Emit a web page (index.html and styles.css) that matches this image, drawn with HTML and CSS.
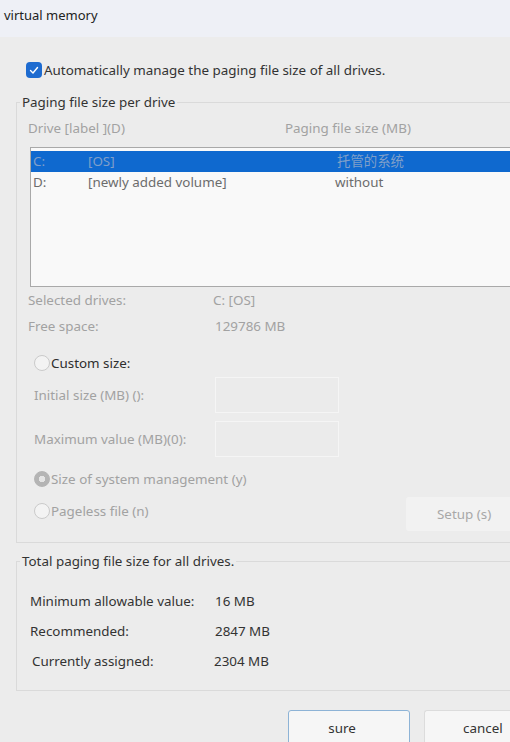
FILE: index.html
```html
<!DOCTYPE html>
<html lang="en">
<head>
    <meta charset="UTF-8">
    <meta name="viewport" content="width=device-width, initial-scale=1.0">
    <title>virtual memory</title>
    <link rel="stylesheet" href="styles.css">
</head>
<body>
    <div class="dialog">
        <div class="titlebar">virtual memory</div>

        <label class="check-row">
            <span class="checkbox">
                <svg width="16" height="16" viewBox="0 0 16 16"><polyline points="4.5,8.5 7,11 11.5,5.5" fill="none" stroke="#fff" stroke-width="1.4" stroke-linecap="round" stroke-linejoin="round"/></svg>
            </span>
            Automatically manage the paging file size of all drives.
        </label>

        <fieldset class="group">
            <legend>Paging file size per drive</legend>
            <div class="list-head disabled">
                <span>Drive [label ](D)</span>
                <span>Paging file size (MB)</span>
            </div>
            <div class="drive-list">
                <div class="drive-row selected"><span>C:</span><span>[OS]</span><span>托管的系统</span></div>
                <div class="drive-row"><span>D:</span><span>[newly added volume]</span><span>without</span></div>
            </div>

            <div class="info-row disabled"><span>Selected drives:</span><span>C: [OS]</span></div>
            <div class="info-row info-gap disabled"><span>Free space:</span><span class="shift">129786 MB</span></div>

            <div class="radio-row custom-radio"><span class="radio"></span><span class="strong">Custom size:</span></div>
            <div class="field-row first-field disabled">
                <span>Initial size (MB) ():</span>
                <span class="textbox"></span>
            </div>
            <div class="field-row disabled">
                <span>Maximum value (MB)(0):</span>
                <span class="textbox"></span>
            </div>

            <div class="radio-row sys-radio disabled"><span class="radio checked"></span><span>Size of system management (y)</span></div>
            <div class="last-row disabled">
                <div class="radio-row pageless"><span class="radio"></span><span>Pageless file (n)</span></div>
                <button class="setup">Setup (s)</button>
            </div>
        </fieldset>

        <fieldset class="group totals">
            <legend>Total paging file size for all drives.</legend>
            <div class="total-grid">
                <span>Minimum allowable value:</span><span>16 MB</span>
                <span>Recommended:</span><span>2847 MB</span>
                <span class="indent">Currently assigned:</span><span class="pull">2304 MB</span>
            </div>
        </fieldset>

        <div class="buttons">
            <button class="btn default">sure</button>
            <button class="btn cut">cancel</button>
        </div>
    </div>
</body>
</html>
```

FILE: styles.css
```css
html, body {
    overflow: hidden;
}
body {
    margin: 0;
    background-color: #ececec;
    font-family: "Noto Sans", "Noto Sans CJK SC", sans-serif;
    font-size: 13.4px;
    line-height: 18px;
    color: #333;
}
.titlebar {
    height: 37px;
    box-sizing: border-box;
    padding: 6px 0 0 4px;
    background-color: #eef0f6;
    color: #222;
    font-size: 13px;
}
.disabled {
    color: #a2a2a2;
}
.check-row {
    display: flex;
    align-items: center;
    gap: 2px;
    height: 16px;
    margin: 25px 0 0 26px;
}
.checkbox {
    width: 16px;
    height: 16px;
    border-radius: 4px;
    background-color: #1d6bd0;
    display: flex;
}
.group {
    margin: 15px 0 0 16px;
    padding: 0 0 11px 0;
    border: 1px solid #dadada;
    border-right: none;
    min-width: 0;
}
.group legend {
    padding: 0 2px;
    margin-left: 3px;
    color: #333;
}
.list-head {
    display: grid;
    grid-template-columns: 257px auto;
    margin: 8px 0 0 11px;
}
.drive-list {
    height: 140px;
    box-sizing: border-box;
    margin: 10px 0 0 13px;
    padding-top: 3px;
    border: 1px solid #a9a9a9;
    border-right: none;
    background-color: #f9f9f9;
}
.drive-row {
    display: grid;
    grid-template-columns: 55px 247px auto;
    height: 21px;
    line-height: 21px;
    padding-left: 2px;
    color: #6c6c6c;
}
.drive-row.selected {
    background-color: #0f69cf;
    color: #7f9fc9;
}
.drive-row.selected span:nth-child(3) {
    padding-left: 2px;
}
.info-row {
    display: grid;
    grid-template-columns: 185px auto;
    margin: 4px 0 0 11px;
}
.info-gap {
    margin-top: 8px;
}
.shift {
    padding-left: 2px;
}
.radio-row {
    display: flex;
    align-items: center;
    gap: 1px;
    margin-left: 17px;
}
.custom-radio {
    margin-top: 19px;
}
.sys-radio {
    margin-top: 13px;
}
.pageless {
    margin-bottom: 6px;
}
.radio {
    width: 16px;
    height: 16px;
    box-sizing: border-box;
    border-radius: 50%;
    border: 1px solid #cacaca;
    background-color: #f3f3f3;
}
.radio.checked {
    border-color: #b4b4b4;
    background: radial-gradient(circle, #e4e4e4 0 3px, #b4b4b4 3.5px);
}
.strong {
    color: #2e2e2e;
}
.field-row {
    display: grid;
    grid-template-columns: 181px 124px;
    align-items: center;
    height: 36px;
    margin: 8px 0 0 17px;
}
.first-field {
    margin-top: 5px;
}
.textbox {
    height: 36px;
    box-sizing: border-box;
    border: 1px solid #f5f5f5;
    background-color: #ebebeb;
}
.last-row {
    display: grid;
    grid-template-columns: 389px 1fr;
    align-items: center;
    height: 34px;
    margin-top: 9px;
}
.setup {
    height: 34px;
    border: none;
    border-radius: 3px 0 0 3px;
    background-color: #f2f2f2;
    font: inherit;
    color: #a8a8a8;
    text-align: left;
    padding-left: 31px;
}
.totals {
    margin-top: 9px;
    padding-bottom: 20px;
}
.total-grid {
    display: grid;
    grid-template-columns: 185px auto;
    row-gap: 12px;
    margin: 22px 0 0 13px;
}
.indent {
    padding-left: 2px;
}
.pull {
    margin-left: -1px;
}
.buttons {
    display: flex;
    gap: 14px;
    margin: 19px 0 0 288px;
}
.btn {
    flex-shrink: 0;
    width: 122px;
    height: 36px;
    padding: 0 14px 0 0;
    border: 1px solid #dcdcdc;
    border-radius: 3px;
    background-color: #f6f6f6;
    font: inherit;
    color: #333;
}
.btn.default {
    border-color: #8db3d6;
}
.btn.cut {
    flex: 1 1 0;
    width: auto;
    min-width: 0;
    border-right: none;
    border-radius: 3px 0 0 3px;
    text-align: left;
    padding-left: 38px;
}
```
